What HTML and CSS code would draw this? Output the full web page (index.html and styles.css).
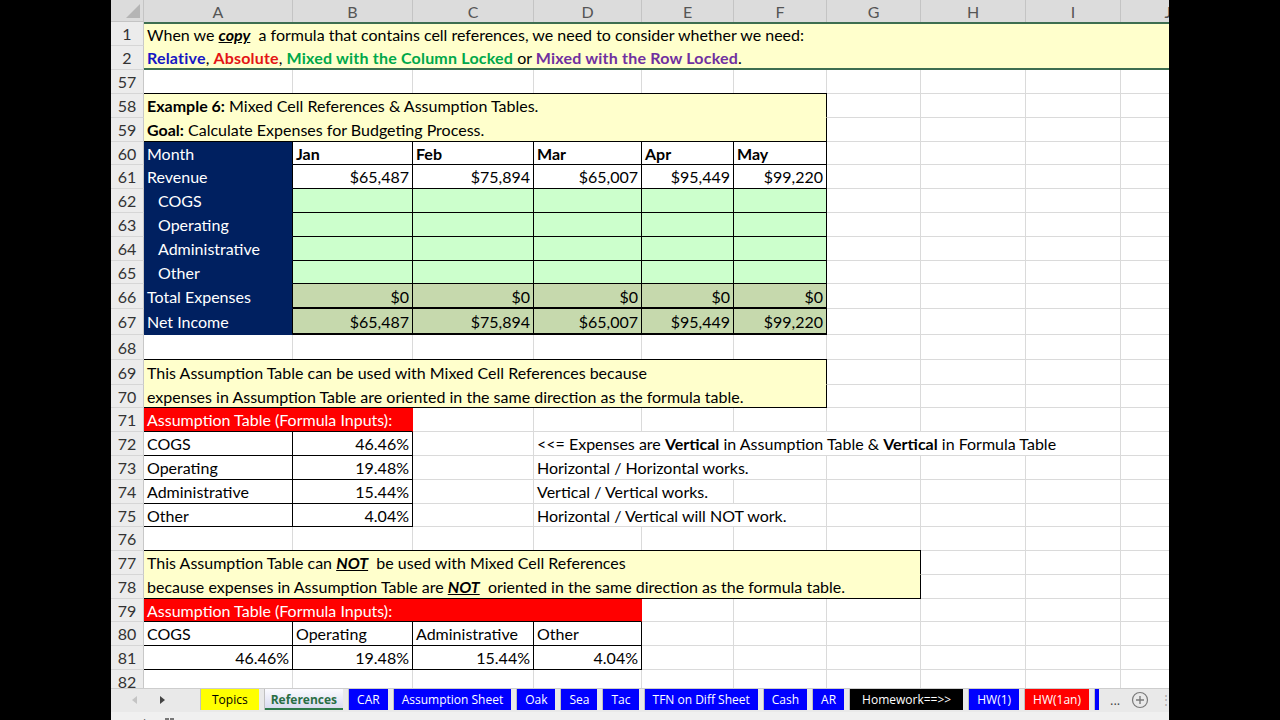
FILE: index.html
```html
<!DOCTYPE html>
<html lang="en">
<head>
  <meta charset="UTF-8">
  <title>References - Excel</title>
  <link rel="stylesheet" href="styles.css">
</head>
<body>
  <div class="screen">
    <div class="sheet">
      <!-- column headers -->
      <div class="corner"></div>
      <div class="ch">A</div><div class="ch">B</div><div class="ch">C</div><div class="ch">D</div><div class="ch">E</div>
      <div class="ch">F</div><div class="ch">G</div><div class="ch">H</div><div class="ch">I</div><div class="ch">J</div>

      <div class="rh">1</div>
      <div class="c yel first s10">When we&nbsp;<b><i><u>copy</u></i></b>&nbsp; a formula that contains cell references, we need to consider whether we need:</div>
      <div class="rh">2</div>
      <div class="c yel second s10"><b class="blue">Relative</b>,&nbsp;<b class="red">Absolute</b>,&nbsp;<b class="grn">Mixed with the Column Locked</b>&nbsp;or&nbsp;<b class="pur">Mixed with the Row Locked</b>.</div>

      <div class="rh">57</div>
      <div class="c"></div><div class="c"></div><div class="c"></div><div class="c"></div><div class="c"></div>
      <div class="c"></div><div class="c"></div><div class="c"></div><div class="c"></div><div class="c"></div>

      <div class="rh">58</div>
      <div class="c yel top bx open s6"><b>Example 6:</b>&nbsp;Mixed Cell References &amp; Assumption Tables.</div>
      <div class="c"></div><div class="c"></div><div class="c"></div><div class="c"></div>
      <div class="rh">59</div>
      <div class="c yel bx s6"><b>Goal:</b>&nbsp;Calculate Expenses for Budgeting Process.</div>
      <div class="c"></div><div class="c"></div><div class="c"></div><div class="c"></div>

      <div class="rh">60</div>
      <div class="c navy">Month</div>
      <div class="c bx"><b>Jan</b></div><div class="c bx"><b>Feb</b></div><div class="c bx"><b>Mar</b></div><div class="c bx"><b>Apr</b></div><div class="c bx"><b>May</b></div>
      <div class="c"></div><div class="c"></div><div class="c"></div><div class="c"></div>

      <div class="rh">61</div>
      <div class="c navy">Revenue</div>
      <div class="c bx num">$65,487</div><div class="c bx num">$75,894</div><div class="c bx num">$65,007</div><div class="c bx num">$95,449</div><div class="c bx num">$99,220</div>
      <div class="c"></div><div class="c"></div><div class="c"></div><div class="c"></div>

      <div class="rh">62</div>
      <div class="c navy ind">COGS</div>
      <div class="c bx mint"></div><div class="c bx mint"></div><div class="c bx mint"></div><div class="c bx mint"></div><div class="c bx mint"></div>
      <div class="c"></div><div class="c"></div><div class="c"></div><div class="c"></div>

      <div class="rh">63</div>
      <div class="c navy ind">Operating</div>
      <div class="c bx mint"></div><div class="c bx mint"></div><div class="c bx mint"></div><div class="c bx mint"></div><div class="c bx mint"></div>
      <div class="c"></div><div class="c"></div><div class="c"></div><div class="c"></div>

      <div class="rh">64</div>
      <div class="c navy ind">Administrative</div>
      <div class="c bx mint"></div><div class="c bx mint"></div><div class="c bx mint"></div><div class="c bx mint"></div><div class="c bx mint"></div>
      <div class="c"></div><div class="c"></div><div class="c"></div><div class="c"></div>

      <div class="rh">65</div>
      <div class="c navy ind">Other</div>
      <div class="c bx mint"></div><div class="c bx mint"></div><div class="c bx mint"></div><div class="c bx mint"></div><div class="c bx mint"></div>
      <div class="c"></div><div class="c"></div><div class="c"></div><div class="c"></div>

      <div class="rh">66</div>
      <div class="c navy">Total Expenses</div>
      <div class="c bx sage num">$0</div><div class="c bx sage num">$0</div><div class="c bx sage num">$0</div><div class="c bx sage num">$0</div><div class="c bx sage num">$0</div>
      <div class="c"></div><div class="c"></div><div class="c"></div><div class="c"></div>

      <div class="rh">67</div>
      <div class="c navy">Net Income</div>
      <div class="c bx sage thick num">$65,487</div><div class="c bx sage thick num">$75,894</div><div class="c bx sage thick num">$65,007</div><div class="c bx sage thick num">$95,449</div><div class="c bx sage thick num">$99,220</div>
      <div class="c"></div><div class="c"></div><div class="c"></div><div class="c"></div>

      <div class="rh">68</div>
      <div class="c"></div><div class="c"></div><div class="c"></div><div class="c"></div><div class="c"></div>
      <div class="c"></div><div class="c"></div><div class="c"></div><div class="c"></div><div class="c"></div>

      <div class="rh">69</div>
      <div class="c yel top bx open s6">This Assumption Table can be used with Mixed Cell References because</div>
      <div class="c"></div><div class="c"></div><div class="c"></div><div class="c"></div>
      <div class="rh">70</div>
      <div class="c yel bx s6">expenses in Assumption Table are oriented in the same direction as the formula table.</div>
      <div class="c"></div><div class="c"></div><div class="c"></div><div class="c"></div>

      <div class="rh">71</div>
      <div class="c fill-red s2">Assumption Table (Formula Inputs):</div>
      <div class="c"></div><div class="c"></div><div class="c"></div><div class="c"></div>
      <div class="c"></div><div class="c"></div><div class="c"></div><div class="c"></div>

      <div class="rh">72</div>
      <div class="c bx">COGS</div><div class="c bx num">46.46%</div><div class="c"></div>
      <div class="c s6">&lt;&lt;= Expenses are&nbsp;<b>Vertical</b>&nbsp;in Assumption Table &amp;&nbsp;<b>Vertical</b>&nbsp;in Formula Table</div>
      <div class="c"></div>

      <div class="rh">73</div>
      <div class="c bx">Operating</div><div class="c bx num">19.48%</div><div class="c"></div>
      <div class="c s3">Horizontal / Horizontal works.</div>
      <div class="c"></div><div class="c"></div><div class="c"></div><div class="c"></div>

      <div class="rh">74</div>
      <div class="c bx">Administrative</div><div class="c bx num">15.44%</div><div class="c"></div>
      <div class="c s2">Vertical / Vertical works.</div>
      <div class="c"></div><div class="c"></div><div class="c"></div><div class="c"></div><div class="c"></div>

      <div class="rh">75</div>
      <div class="c bx">Other</div><div class="c bx num">4.04%</div><div class="c"></div>
      <div class="c s3">Horizontal / Vertical will NOT work.</div>
      <div class="c"></div><div class="c"></div><div class="c"></div><div class="c"></div>

      <div class="rh">76</div>
      <div class="c"></div><div class="c"></div><div class="c"></div><div class="c"></div><div class="c"></div>
      <div class="c"></div><div class="c"></div><div class="c"></div><div class="c"></div><div class="c"></div>

      <div class="rh">77</div>
      <div class="c yel top bx open s7">This Assumption Table can&nbsp;<b><i><u>NOT</u></i></b>&nbsp; be used with Mixed Cell References</div>
      <div class="c"></div><div class="c"></div><div class="c"></div>
      <div class="rh">78</div>
      <div class="c yel bx s7">because expenses in Assumption Table are&nbsp;<b><i><u>NOT</u></i></b>&nbsp; oriented in the same direction as the formula table.</div>
      <div class="c"></div><div class="c"></div><div class="c"></div>

      <div class="rh">79</div>
      <div class="c fill-red s4">Assumption Table (Formula Inputs):</div>
      <div class="c"></div><div class="c"></div><div class="c"></div><div class="c"></div><div class="c"></div><div class="c"></div>

      <div class="rh">80</div>
      <div class="c bx">COGS</div><div class="c bx">Operating</div><div class="c bx">Administrative</div><div class="c bx">Other</div>
      <div class="c"></div><div class="c"></div><div class="c"></div><div class="c"></div><div class="c"></div><div class="c"></div>

      <div class="rh">81</div>
      <div class="c bx num">46.46%</div><div class="c bx num">19.48%</div><div class="c bx num">15.44%</div><div class="c bx num">4.04%</div>
      <div class="c"></div><div class="c"></div><div class="c"></div><div class="c"></div><div class="c"></div><div class="c"></div>

      <div class="rh">82</div>
      <div class="c"></div><div class="c"></div><div class="c"></div><div class="c"></div><div class="c"></div>
      <div class="c"></div><div class="c"></div><div class="c"></div><div class="c"></div><div class="c"></div>
    </div>

    <div class="tabbar">
      <div class="tabnav">
        <svg width="6" height="8" viewBox="0 0 6 8"><path d="M5 0 L0 4 L5 8 Z" fill="#c4c4c4"/></svg>
        <svg width="6" height="8" viewBox="0 0 6 8"><path d="M1 0 L6 4 L1 8 Z" fill="#444"/></svg>
      </div>
      <div class="tab t-yellow">Topics</div>
      <div class="tab active">References</div>
      <div class="tab">CAR</div>
      <div class="tab">Assumption Sheet</div>
      <div class="tab">Oak</div>
      <div class="tab">Sea</div>
      <div class="tab">Tac</div>
      <div class="tab">TFN on Diff Sheet</div>
      <div class="tab">Cash</div>
      <div class="tab">AR</div>
      <div class="tab t-black">Homework==&gt;&gt;</div>
      <div class="tab">HW(1)</div>
      <div class="tab t-red">HW(1an)</div>
      <div class="tab sliver"></div>
      <div class="more">...</div>
      <div class="add">
        <svg width="18" height="18" viewBox="0 0 18 18"><circle cx="9" cy="9" r="7.5" fill="none" stroke="#7a7a7a" stroke-width="1.2"/><path d="M9 5 V13 M5 9 H13" stroke="#7a7a7a" stroke-width="1.4"/></svg>
      </div>
      <div class="grip">&#8942;</div>
    </div>

    <div class="status">
      <span class="ready">Ready</span>
      <svg width="12" height="8" viewBox="0 0 12 8"><rect x="1" y="2" width="4" height="6" fill="#777"/><rect x="6" y="2" width="4" height="6" fill="#777"/></svg>
    </div>
  </div>
</body>
</html>
```

FILE: styles.css
```css
body {
  margin: 0;
  background: #000;
  font-family: Lato, "Liberation Sans", sans-serif;
}

.screen {
  margin-left: 111px;
  width: 1058px;
  height: 720px;
  background: #fff;
  overflow: hidden;
  display: flex;
  flex-direction: column;
}

/* spreadsheet grid */
.sheet {
  height: 688px;
  flex: none;
  overflow: hidden;
  display: grid;
  grid-template-columns: 33px 149px 120px 121px 108px 92px 93px 94px 105px 95px 95px;
  grid-template-rows: 22px 24px 24px 24px 24px 24px 23px 24px 24px 24px 24px 23px 25px 26px 25px 25px 23px 24px 24px 24px 24px 23px 24px 24px 24px 23px 24px 24px 24px;
  font-size: 16px;
  color: #000;
}

.corner {
  background: #dcdcdc;
  border-right: 1px solid #c4c4c4;
  border-bottom: 1px solid #c4c4c4;
  position: relative;
}

.corner::after {
  content: "";
  position: absolute;
  right: 3px;
  bottom: 3px;
  border-left: 14px solid transparent;
  border-bottom: 14px solid #b5b5b5;
}

.ch {
  background: #dcdcdc;
  border-right: 1px solid #c4c4c4;
  color: #555;
  font-size: 16px;
  display: flex;
  align-items: center;
  justify-content: center;
}

.rh {
  background: #ececec;
  border-right: 1px solid #c8c8c8;
  border-bottom: 1px solid #d6d6d6;
  color: #333;
  font-size: 16px;
  display: flex;
  align-items: center;
  justify-content: center;
}

.c {
  border-right: 1px solid #dadada;
  border-bottom: 1px solid #dadada;
  padding: 0 3px;
  display: flex;
  align-items: center;
  white-space: nowrap;
  min-width: 0;
}

.s2 { grid-column: span 2; }
.s3 { grid-column: span 3; }
.s4 { grid-column: span 4; }
.s6 { grid-column: span 6; }
.s7 { grid-column: span 7; }
.s10 { grid-column: span 10; }

.num { justify-content: flex-end; }
.ind { padding-left: 14px; }

.yel { background: #ffffcc; border-right-color: #ffffcc; border-bottom-color: #ffffcc; }
.first { border-top: 2px solid #3d6e50; }
.second { border-bottom: 2px solid #3d6e50; }
.second b { letter-spacing: 0.2px; }

.bx { border-right-color: #000; border-bottom-color: #000; }
.bx.open { border-bottom-color: #ffffcc; }
.top { box-shadow: 0 -1px 0 #000; }

.navy {
  background: #002060;
  color: #fff;
  border-right-color: #000;
  border-bottom-color: #002060;
}

.mint { background: #ccffcc; }
.sage { background: #c6d9ad; }
.thick {
  border-bottom-width: 2px;
  box-shadow: 0 -2px 0 #000;
}

.fill-red {
  background: #ff0000;
  color: #fff;
  border-right-color: #ff0000;
  border-bottom-color: #000;
}

.blue { color: #1616c4; }
.red { color: #e41414; }
.grn { color: #00a84a; }
.pur { color: #7030a0; }

/* sheet tabs */
.tabbar {
  height: 21px;
  flex: none;
  background: #e9e9e9;
  border-top: 1px solid #cdcdcd;
  display: flex;
  align-items: stretch;
  gap: 5px;
  padding-bottom: 2px;
  font-family: "Open Sans", "Liberation Sans", sans-serif;
  font-size: 12px;
}

.tabbar > * { flex: none; }

.tabnav {
  width: 84px;
  display: flex;
  align-items: center;
  gap: 21px;
  padding-left: 21px;
  box-sizing: border-box;
}

.tab {
  background: #0000ff;
  color: #fff;
  padding: 0 8px;
  display: flex;
  align-items: center;
  border-left: 1px solid #c0c0c0;
  white-space: nowrap;
}

.tab.t-yellow { background: #ffff00; color: #000; padding: 0 11px; }
.tab.t-black { background: #000; padding: 0 12px; }
.tab.t-red { background: #ff0000; }
.tab.sliver { padding: 0; width: 4px; }

.tab.active {
  background: linear-gradient(#fbfbff, #d6d8ee);
  color: #2a6e45;
  font-weight: bold;
  padding: 0 6px;
  box-shadow: inset 0 -2px 0 #2e7a4b;
}

.more {
  color: #444;
  display: flex;
  align-items: center;
  padding-left: 6px;
  font-size: 13px;
}

.add {
  display: flex;
  align-items: center;
  padding-left: 6px;
}

.grip {
  color: #aaa;
  display: flex;
  align-items: center;
  padding-left: 6px;
}

.status {
  flex: 1;
  background: #f0f0f0;
  display: flex;
  align-items: flex-start;
  gap: 12px;
  padding: 4px 0 0 7px;
  font-family: "Open Sans", sans-serif;
  font-size: 12px;
  color: #555;
  overflow: hidden;
}
```
